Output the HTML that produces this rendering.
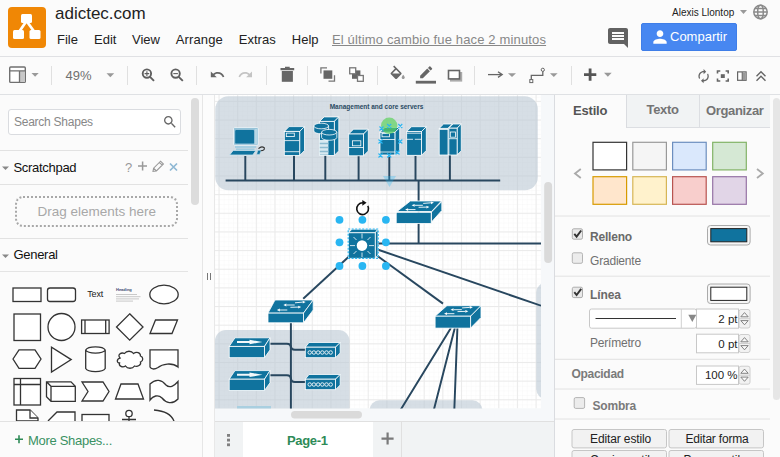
<!DOCTYPE html>
<html><head><meta charset="utf-8">
<style>
*{box-sizing:border-box;margin:0;padding:0}
html,body{width:780px;height:457px;overflow:hidden;background:#fbfbfb;font-family:"Liberation Sans",sans-serif;color:#000;position:relative}
.a{position:absolute}
.t{position:absolute;white-space:nowrap;line-height:1}
svg{position:absolute;overflow:visible}
</style></head><body>
<!-- HEADER -->
<div class="a" style="left:0;top:0;width:780px;height:57px;background:#fbfbfb;border-bottom:1px solid #e0e1e4"></div>
<svg style="left:0;top:0" width="60" height="56">
  <rect x="8" y="7" width="38" height="41" rx="4" fill="#f08705"/>
  <rect x="21" y="14" width="11" height="9" rx="1.5" fill="#fff"/>
  <rect x="13" y="30" width="11" height="9" rx="1.5" fill="#fff"/>
  <rect x="29.5" y="30" width="11" height="9" rx="1.5" fill="#fff"/>
  <path d="M26.5 21 L19 32 M26.5 21 L34.5 32" stroke="#fff" stroke-width="2.7" fill="none"/>
</svg>
<div class="t" style="left:55px;top:5px;font-size:17px;color:#222">adictec.com</div>
<div class="t" style="left:57px;top:33px;font-size:13px;color:#222">File</div>
<div class="t" style="left:94px;top:33px;font-size:13px;color:#222">Edit</div>
<div class="t" style="left:132px;top:33px;font-size:13px;color:#222">View</div>
<div class="t" style="left:175.7px;top:33px;font-size:13px;color:#222;letter-spacing:0.15px">Arrange</div>
<div class="t" style="left:238.8px;top:33px;font-size:13px;color:#222">Extras</div>
<div class="t" style="left:291.8px;top:33px;font-size:13px;color:#222">Help</div>
<div class="t" style="left:332px;top:33px;font-size:13px;color:#888;text-decoration:underline;letter-spacing:0.15px">El último cambio fue hace 2 minutos</div>
<div class="t" style="left:672px;top:8px;font-size:10px;color:#222">Alexis Llontop</div>
<svg style="left:740px;top:10px" width="8" height="5"><path d="M0 0H7L3.5 4z" fill="#999"/></svg>
<svg style="left:752px;top:4px" width="18" height="18" viewBox="0 0 18 18">
  <g fill="none" stroke="#8a8a8a" stroke-width="1.5"><circle cx="8.5" cy="8" r="6.7"/><ellipse cx="8.5" cy="8" rx="2.8" ry="6.7"/><path d="M1.8 8H15.2M2.8 4.6H14.2M2.8 11.4H14.2"/></g>
</svg>
<svg style="left:606px;top:26px" width="24" height="24" viewBox="0 0 24 24"><path fill="#626262" d="M21.99 4c0-1.1-.89-2-1.99-2H4c-1.1 0-2 .9-2 2v12c0 1.1.9 2 2 2h14l4 4-.01-18zM18 14H6v-2h12v2zm0-3H6V9h12v2zm0-3H6V6h12v2z"/></svg>
<div class="a" style="left:641px;top:23px;width:96px;height:28px;background:#4787f1;border-radius:2px;border:1px solid #3f7ee8"></div>
<svg style="left:650px;top:27px" width="20" height="20" viewBox="0 0 24 24"><path fill="#fff" d="M12 12c2.21 0 4-1.79 4-4s-1.79-4-4-4-4 1.79-4 4 1.79 4 4 4zm0 2c-2.67 0-8 1.34-8 4v2h16v-2c0-2.66-5.33-4-8-4z"/></svg>
<div class="t" style="left:670px;top:30px;font-size:13px;color:#fff">Compartir</div>

<!-- TOOLBAR -->
<div class="a" style="left:0;top:57px;width:780px;height:38px;background:#fbfbfb;border-bottom:1px solid #dfe1e4"></div>

<div class="a" style="left:51px;top:66px;width:1px;height:19px;background:#e0e0e0"></div>
<div class="a" style="left:127px;top:66px;width:1px;height:19px;background:#e0e0e0"></div>
<div class="a" style="left:196px;top:66px;width:1px;height:19px;background:#e0e0e0"></div>
<div class="a" style="left:266px;top:66px;width:1px;height:19px;background:#e0e0e0"></div>
<div class="a" style="left:307px;top:66px;width:1px;height:19px;background:#e0e0e0"></div>
<div class="a" style="left:377px;top:66px;width:1px;height:19px;background:#e0e0e0"></div>
<div class="a" style="left:474px;top:66px;width:1px;height:19px;background:#e0e0e0"></div>
<div class="a" style="left:571px;top:66px;width:1px;height:19px;background:#e0e0e0"></div>
<svg style="left:0;top:56px" width="780" height="39" viewBox="0 56 780 39">
  <!-- layout icon -->
  <rect x="9.7" y="67" width="15.6" height="15.4" rx="1" fill="#fff" stroke="#707070" stroke-width="1.4"/>
  <rect x="19.5" y="71" width="5.5" height="11" fill="#c8c8c8"/>
  <path d="M9.7 70.9H25.3M19.5 71V82.4" stroke="#707070" stroke-width="1.3" fill="none"/>
  <path d="M31.5 73H38.7L35.1 76.8z" fill="#999"/>
  <text x="65.5" y="79.7" font-family="Liberation Sans" font-size="13" fill="#707070">49%</text>
  <path d="M106.5 73.3H114.2L110.35 77.2z" fill="#999"/>
  <!-- zoom in/out -->
  <g fill="none" stroke="#5f5f5f" stroke-width="1.9">
    <circle cx="146.9" cy="73.6" r="4.2"/><path d="M150 76.8L154 80.9"/>
    <circle cx="175.6" cy="73.6" r="4.2"/><path d="M178.7 76.8L182.8 80.9"/>
  </g>
  <path d="M144.6 73.6H149.2M146.9 71.3V75.9" stroke="#5f5f5f" stroke-width="1.1"/>
  <path d="M173.3 73.6H177.9" stroke="#5f5f5f" stroke-width="1.1"/>
  <!-- undo redo -->
  <g transform="translate(209.5,66.8) scale(0.66)"><path fill="#666" d="M12.5 8c-2.65 0-5.05.99-6.9 2.6L2 7v9h9l-3.62-3.62c1.39-1.16 3.16-1.88 5.12-1.88 3.54 0 6.55 2.31 7.6 5.5l2.37-.78C21.08 11.03 17.15 8 12.5 8z"/></g>
  <g transform="translate(237.5,66.8) scale(0.66)"><path fill="#c4c4c4" d="M18.4 10.6C16.55 8.99 14.15 8 11.5 8c-4.65 0-8.58 3.03-9.96 7.22L3.9 16c1.05-3.19 4.05-5.5 7.6-5.5 1.950 0 3.73.72 5.12 1.88L13 16h9V7l-3.6 3.6z"/></g>
  <!-- trash -->
  <path d="M280.5 68H294.2V70.2H280.5z M285 66.8H289.7V68H285z" fill="#666"/>
  <path d="M281.8 71H292.9V81.8H281.8z" fill="#666"/>
  <!-- to front -->
  <path d="M320.9 73.5V67.8H327" fill="none" stroke="#777" stroke-width="1.3"/>
  <rect x="323.5" y="70.4" width="8.8" height="8.4" fill="#666"/>
  <path d="M328.5 81.1H334.5V75.3" fill="none" stroke="#777" stroke-width="1.3"/>
  <!-- to back -->
  <rect x="352" y="70.4" width="8.4" height="8.4" fill="#666"/>
  <rect x="349.7" y="67.8" width="6" height="6" fill="#fff" stroke="#777" stroke-width="1.3"/>
  <rect x="357.5" y="75.5" width="5.8" height="5.8" fill="#fff" stroke="#777" stroke-width="1.3"/>
  <!-- fill bucket -->
  <g transform="translate(388.2,65.6) scale(0.79)"><path fill="#666" d="M16.56 8.94L7.62 0 6.21 1.41l2.38 2.38-5.15 5.15c-.59.59-.59 1.54 0 2.12l5.5 5.5c.29.29.68.44 1.06.44s.77-.15 1.06-.44l5.5-5.5c.59-.58.59-1.53 0-2.12zM5.21 10L10 5.21 14.79 10H5.21z"/><path fill="#999" d="M19 11.5s-2 2.17-2 3.5c0 1.1.9 2 2 2s2-.9 2-2c0-1.33-2-3.5-2-3.5z"/></g>
  <!-- pencil -->
  <g transform="translate(417.3,66.3) scale(0.71)"><path fill="#666" d="M17.75 7L14 3.25l-10 10V17h3.75l10-10zm2.96-2.96c.39-.39.39-1.02 0-1.41L18.37.29c-.39-.39-1.02-.39-1.41 0L15 2.25 18.75 6l1.96-1.96z"/></g>
  <rect x="415.8" y="80.8" width="20.2" height="2.8" fill="#666"/>
  <!-- shadow -->
  <rect x="450" y="72" width="12.2" height="9.6" fill="#aaa"/>
  <rect x="448.5" y="70.5" width="11" height="8.4" fill="#fff" stroke="#666" stroke-width="1.6"/>
  <!-- arrow -->
  <path d="M488 74.6H501" stroke="#666" stroke-width="1.3"/>
  <path d="M498 71.8L502.2 74.6L498 77.4" fill="none" stroke="#666" stroke-width="1.3"/>
  <path d="M508 73.3H516L512 77.1z" fill="#999"/>
  <!-- waypoint -->
  <path d="M531.3 81V75.3H542.8V69.5" fill="none" stroke="#666" stroke-width="1.3"/>
  <rect x="529.8" y="79.6" width="3" height="3" fill="#fff" stroke="#666" stroke-width="1"/>
  <circle cx="542.8" cy="69.8" r="1.6" fill="#fff" stroke="#666" stroke-width="1"/>
  <path d="M550 73.3H557.6L553.8 77.1z" fill="#999"/>
  <!-- plus -->
  <path d="M590.1 68.5V80.7M584 74.6H596.3" stroke="#555" stroke-width="2.8"/>
  <path d="M604 72.8H611.7L607.85 76.7z" fill="#999"/>
  <!-- refresh -->
  <g transform="translate(695.8,68.4) scale(0.65)"><path fill="#666" d="M12 6v3l4-4-4-4v3c-4.42 0-8 3.58-8 8 0 1.57.46 3.030 1.24 4.26L6.7 14.8c-.45-.83-.7-1.79-.7-2.8 0-3.31 2.69-6 6-6zm6.76 1.74L17.3 9.2c.44.84.7 1.79.7 2.8 0 3.310-2.69 6-6 6v-3l-4 4 4 4v-3c4.42 0 8-3.58 8-8 0-1.57-.46-3.03-1.24-4.26z"/></g>
  <!-- fit -->
  <path d="M717.5 73.5V71H720.3M725.6 71H728.2V73.5M728.2 78.5V81H725.6M720.3 81H717.5V78.5" fill="none" stroke="#666" stroke-width="1.6"/>
  <rect x="720.8" y="74.2" width="4" height="3.8" fill="#666"/>
  <!-- panel -->
  <rect x="737.6" y="71.9" width="8.5" height="8.4" fill="#fff" stroke="#666" stroke-width="1.2"/>
  <rect x="742.2" y="72.4" width="3.5" height="7.6" fill="#999"/>
  <path d="M742.2 72V80.3" stroke="#666" stroke-width="1"/>
  <!-- chevrons -->
  <path d="M756.5 76.3L761 71.8L765.5 76.3M756.5 80.8L761 76.3L765.5 80.8" fill="none" stroke="#666" stroke-width="1.4"/>
</svg>

<!-- SIDEBAR -->
<div class="a" style="left:0;top:95px;width:203px;height:362px;background:#fbfbfb;border-right:1px solid #e6e6e6"></div>
<div class="a" style="left:8px;top:109px;width:173px;height:26px;background:#fff;border:1px solid #dadce0;border-radius:3px"></div>
<div class="t" style="left:14px;top:116px;font-size:12px;color:#888;letter-spacing:-0.25px">Search Shapes</div>
<svg style="left:161.5px;top:113.5px" width="16" height="16" viewBox="0 0 24 24"><path fill="#666" d="M15.5 14h-.79l-.28-.27C15.41 12.59 16 11.11 16 9.5 16 5.91 13.09 3 9.5 3S3 5.91 3 9.5 5.91 16 9.5 16c1.61 0 3.090-.59 4.23-1.57l.27.28v.79l5 4.99L20.49 19l-4.99-5zm-6 0C7.01 14 5 11.99 5 9.5S7.01 5 9.5 5 14 7.010 14 9.5 11.99 14 9.5 14z"/></svg>
<div class="a" style="left:0;top:150px;width:188px;height:1px;background:#e2e2e2"></div>
<svg style="left:0;top:160px" width="12" height="12"><path d="M2 6.5H9L5.5 10z" fill="#888"/></svg>
<div class="t" style="left:13.5px;top:160.5px;font-size:13px;color:#111;letter-spacing:-0.3px">Scratchpad</div>
<div class="t" style="left:125px;top:160.5px;font-size:13px;color:#999">?</div>
<svg style="left:136px;top:159px" width="45" height="14">
  <path d="M6.6 2.5V11.5M2 7H11" stroke="#999" stroke-width="1.5"/>
  <path d="M17 12.3L17.6 9.2L24.6 2.2L27.4 5L20.4 12z M23.4 3.4L26.2 6.2M17.6 9.2L20.4 12" fill="none" stroke="#999" stroke-width="1.1"/>
  <path d="M34 4.5L41 11.5M41 4.5L34 11.5" stroke="#8fb8d4" stroke-width="1.7"/>
</svg>
<div class="a" style="left:0;top:184px;width:188px;height:1px;background:#e2e2e2"></div>
<div class="a" style="left:15px;top:196px;width:163px;height:31px;border:2px dotted #a8a8a8;border-radius:8px"></div>
<div class="t" style="left:37.5px;top:205px;font-size:13.5px;color:#a8a8a8">Drag elements here</div>
<div class="a" style="left:0;top:238px;width:188px;height:1px;background:#e2e2e2"></div>
<svg style="left:0;top:248px" width="12" height="12"><path d="M2 6.5H9L5.5 10z" fill="#888"/></svg>
<div class="t" style="left:13.5px;top:247.5px;font-size:13px;color:#111;letter-spacing:-0.3px">General</div>
<div class="a" style="left:0;top:271px;width:188px;height:1px;background:#e4e4e4"></div>
<div class="a" style="left:191px;top:98px;width:8px;height:107px;background:#dcdcdc;border-radius:4px"></div>
<svg style="left:0;top:270px" width="190" height="152" viewBox="0 270 190 152">
 <g fill="#fff" stroke="#333" stroke-width="1.3">
  <rect x="13" y="288" width="28" height="13.5"/>
  <rect x="47.5" y="288" width="28" height="13.5" rx="2.5"/>
  <ellipse cx="164" cy="294.5" rx="14.2" ry="9.3"/>
  <rect x="14" y="314" width="26.5" height="26.5"/>
  <circle cx="61.5" cy="327" r="13.5"/>
  <rect x="81.6" y="320" width="27.5" height="13.5"/>
  <path d="M85 320V333.5M105.7 320V333.5"/>
  <path d="M129.7 313.8L143 327L129.7 340.2L116.5 327z"/>
  <path d="M155.5 320H177.5L172 333.5H150z"/>
  <path d="M13 359L19 349.8H35L41 359L35 368.3H19z"/>
  <path d="M51.5 347.2V372L71.2 359.6z"/>
  <path d="M85.7 350V368.5A10 4 0 0 0 105.2 368.5V350A10 4 0 0 0 85.7 350z M85.7 350A10 4 0 0 0 105.2 350"/>
  <path d="M120 358c-3-3 1-6 4.5-4.5 2-3 7-3 9 0 3-2 7-1 7 2.5 3 1 3 5 0 6 1 3-3 5-6 4-2 3-7 3-9 0-3 2-7 0-6-3-3 0-3-4 0.5-5z"/>
  <path d="M150 349.8H178V367C172 362 162 364 158 367.5C154 370 151 369 150 367z"/>
  <rect x="14" y="378.5" width="26.5" height="26.5"/>
  <path d="M20.5 378.5V405M14 384.5H40.5" />
  <path d="M46.5 381.8H71L75.3 386.3V401.3H51L46.5 396.8z M46.5 381.8L51 386.3H75.3M51 386.3V401.3"/>
  <path d="M82 382H103L109 391.5L103 401H82L88 391.5z"/>
  <path d="M121 384H138L143.5 399H115.5z"/>
  <path d="M150 384C156 378 162 380 166 385C170 389 175 385 178 381.5V399C172 405 166 403 162 398C158 394 153 396 150 400z"/>
  <path d="M16.5 421V410H30L38 418V421z"/>
  <path d="M30 410V418H38"/>
  <path d="M48 421L57 412H75V421"/>
  <rect x="82" y="414.5" width="27" height="10"/>
  <circle cx="129" cy="413.5" r="3.2"/>
  <path d="M122 419.5H136M129 416.7V421"/>
  <path d="M154 410C166 411 172 416 174 421"/>
 </g>
 <text x="87.3" y="297" font-family="Liberation Sans" font-size="9" letter-spacing="-0.2" fill="#222">Text</text>
 <text x="116" y="290.5" font-family="Liberation Sans" font-size="4" font-weight="bold" fill="#3a4a70">Heading</text>
 <g stroke="#8a8a8a" stroke-width="0.45"><path d="M116 294.5H137M116 296.7H140.5M116 298.9H139M116 301.1H133"/></g>
</svg>
<div class="a" style="left:0;top:421px;width:203px;height:36px;background:#fbfbfb;border-top:1px solid #e2e2e2;border-right:1px solid #e6e6e6"></div>
<svg style="left:13px;top:433px" width="12" height="12"><path d="M6 2.3V10.3M2 6.3H10" stroke="#2e8b57" stroke-width="1.6"/></svg>
<div class="t" style="left:28px;top:433.5px;font-size:13px;color:#3a9163;letter-spacing:-0.3px">More Shapes...</div>
<!-- HSPLIT -->
<div class="a" style="left:203px;top:95px;width:12px;height:362px;background:#fcfcfc;border-right:1px solid #e8e8e8"></div>
<div class="a" style="left:207px;top:273px;width:1.3px;height:7px;background:#777"></div>
<div class="a" style="left:209.5px;top:273px;width:1.3px;height:7px;background:#777"></div>

<!-- CANVAS -->
<div class="a" style="left:215px;top:95px;width:339px;height:326px;background:#f6f8fa"></div>
<svg style="left:0;top:0" width="780" height="457" viewBox="0 0 780 457">
 <defs>
  <pattern id="gmin" patternUnits="userSpaceOnUse" x="219" y="194.6" width="4.6625" height="4.6625">
    <path d="M0 0.25H4.6625M0.25 0V4.6625" stroke="#f3f3f3" stroke-width="0.4" fill="none"/>
  </pattern>
  <pattern id="gmaj" patternUnits="userSpaceOnUse" x="218.5" y="194.1" width="18.65" height="18.65">
    <path d="M0 0.5H18.65M0.5 0V18.65" stroke="#eaeaea" stroke-width="1" fill="none"/>
  </pattern>
  <clipPath id="cc"><rect x="215" y="95" width="326" height="313.5"/></clipPath>
 </defs>
 <g clip-path="url(#cc)">
  <rect x="215" y="95" width="326" height="313.5" fill="#fff"/>
  <rect x="215" y="95" width="326" height="313.5" fill="url(#gmin)"/>
  <rect x="215" y="95" width="326" height="313.5" fill="url(#gmaj)"/>
  <!-- groups -->
  <g fill="#bac8d3" fill-opacity="0.6">
   <rect x="215.3" y="96.3" width="322.5" height="94" rx="13"/>
   <rect x="215" y="330" width="134.5" height="100" rx="11"/>
   <rect x="369.6" y="400.3" width="112.8" height="40" rx="10"/>
   <rect x="536.3" y="282.6" width="40" height="116.5" rx="10"/>
  </g>
  <text x="376.5" y="108.8" text-anchor="middle" font-family="Liberation Sans" font-size="6.5" font-weight="bold" fill="#2a4a62">Management and core servers</text>
  <!-- edges -->
  <g stroke="#28475f" stroke-width="1.95" fill="none">
   <path d="M225.6 180.4H500.2"/>
   <path d="M245.3 156V180.4M294 155V180.4M325.3 155V180.4M358.6 156V180.4M389.3 155V180.4M415.5 156V180.4M449.9 155V180.4"/>
   <path d="M418.6 180V243.5M378 243.5H541"/>
   <path d="M377.5 249.5L541 305.7"/>
   <path d="M377.5 256L443 303.6"/>
   <path d="M349 256.5L303.2 298.7"/>
   <path d="M290.9 322.8V410"/>
   <path d="M269.5 343.8H286.9Q290.9 343.8 290.9 347.8M290.9 345.8Q290.9 349.8 294.9 349.8H306"/>
   <path d="M269.5 375.3H286.9Q290.9 375.3 290.9 379.3M290.9 377.9Q290.9 381.9 294.9 381.9H306"/>
   <path d="M450.9 328L400.5 410M454.8 328L433.8 410M457.4 328L454.3 410"/>
  </g>
  <!-- PC -->
  <rect x="233.6" y="127.6" width="24.6" height="17.6" rx="1" fill="#8fbfd6" stroke="#fff" stroke-width="0.7"/>
  <rect x="235.2" y="129.9" width="19" height="13.7" rx="1.2" fill="#10739e"/>
  <rect x="254.6" y="129" width="2.8" height="15" fill="#b5d6e5"/>
  <rect x="235" y="146.2" width="21" height="1.6" fill="#9ccae0"/>
  <rect x="236" y="148.5" width="18.5" height="1.5" fill="#9ccae0"/>
  <path d="M233.2 150.4H256L252.8 155H229.6z" fill="#10739e" stroke="#cfe6f0" stroke-width="0.8"/>
  <path d="M257.8 150.2H261.4L259.6 154.4H256.6z" fill="#10739e" stroke="#cfe6f0" stroke-width="0.6"/>
  <path d="M258.5 148.7Q261.5 145.6 264.3 147.8Q265 150.3 260.8 150.8" stroke="#333" stroke-width="1.1" fill="none"/>
  <!-- servers -->
  <path d="M284.3 131.4L289.1 126.6H304.5L299.7 131.4z" fill="#10739e" stroke="#fff" stroke-width="0.8"/><path d="M299.7 131.4L304.5 126.6V150.6L299.7 155.4z" fill="#10739e" stroke="#fff" stroke-width="0.8"/><rect x="284.3" y="131.4" width="15.399999999999999" height="24.0" fill="#10739e" stroke="#fff" stroke-width="0.8"/>
  <g fill="none" stroke="#fff" stroke-width="0.8"><rect x="286.3" y="133.1" width="8" height="3.5"/><path d="M284.3 140.6H299.5M284.3 151.7H299.5"/></g>
  <!-- db server -->
  <path d="M319.6 121.4L324.1 116.9H338.8L334.3 121.4z" fill="#10739e" stroke="#fff" stroke-width="0.8"/><path d="M334.3 121.4L338.8 116.9V150.9L334.3 155.4z" fill="#10739e" stroke="#fff" stroke-width="0.8"/><rect x="319.6" y="121.4" width="14.7" height="34.0" fill="#10739e" stroke="#fff" stroke-width="0.8"/>
  <rect x="319.8" y="140" width="8.6" height="14.8" fill="#d8e9f1"/><path d="M319.8 143.5H328.4M319.8 147.5H328.4M319.8 151.5H328.4" stroke="#8dbbd0" stroke-width="1.3"/>
  <g stroke="#fff" stroke-width="0.8">
   <path d="M313.8 126V131A7.4 2.8 0 0 0 328.6 131V126z" fill="#10739e"/><ellipse cx="321.2" cy="126" rx="7.4" ry="2.8" fill="#10739e"/>
   <path d="M321.6 132.2V137.5A7.6 2.8 0 0 0 336.8 137.5V132.2z" fill="#10739e"/><ellipse cx="329.2" cy="132.2" rx="7.6" ry="2.8" fill="#10739e"/>
  </g>
  <path d="M348.7 134.0L353.5 129.2H368.3L363.5 134.0z" fill="#10739e" stroke="#fff" stroke-width="0.8"/><path d="M363.5 134.0L368.3 129.2V150.99999999999997L363.5 155.79999999999998z" fill="#10739e" stroke="#fff" stroke-width="0.8"/><rect x="348.7" y="134.0" width="14.8" height="21.8" fill="#10739e" stroke="#fff" stroke-width="0.8"/>
  <g fill="none" stroke="#fff" stroke-width="0.8"><rect x="352.5" y="140.8" width="8.3" height="5"/><path d="M348.7 147.5H363.5"/></g>
  <path d="M380 132.3L384.8 127.5H399.7L394.9 132.3z" fill="#10739e" stroke="#fff" stroke-width="0.8"/><path d="M394.9 132.3L399.7 127.5V150.2L394.9 155.0z" fill="#10739e" stroke="#fff" stroke-width="0.8"/><rect x="380" y="132.3" width="14.899999999999999" height="22.7" fill="#10739e" stroke="#fff" stroke-width="0.8"/>
  <g fill="none" stroke="#fff" stroke-width="0.8"><rect x="382" y="133.5" width="7.5" height="3.3"/><path d="M380 139.5H395M380 152H395"/></g>
  <path d="M406.7 131.5L411.5 126.7H426.3L421.5 131.5z" fill="#10739e" stroke="#fff" stroke-width="0.8"/><path d="M421.5 131.5L426.3 126.7V150.5L421.5 155.3z" fill="#10739e" stroke="#fff" stroke-width="0.8"/><rect x="406.7" y="131.5" width="14.8" height="23.8" fill="#10739e" stroke="#fff" stroke-width="0.8"/>
  <g fill="none" stroke="#fff" stroke-width="0.8"><path d="M406.7 133.2H421.5M406.7 139.3H413M414.8 139.3H421.5"/></g>
  <!-- tower 6 -->
  <path d="M439.2 128.4L443.59999999999997 124H452.4L448.0 128.4z" fill="#10739e" stroke="#fff" stroke-width="0.8"/><path d="M448.0 128.4L452.4 124V150.6L448.0 155z" fill="#10739e" stroke="#fff" stroke-width="0.8"/><rect x="439.2" y="128.4" width="8.799999999999999" height="26.6" fill="#10739e" stroke="#fff" stroke-width="0.8"/>
  <path d="M448.9 128.2L453.09999999999997 124H461.29999999999995L457.09999999999997 128.2z" fill="#10739e" stroke="#fff" stroke-width="0.8"/><path d="M457.09999999999997 128.2L461.29999999999995 124V150.8L457.09999999999997 155z" fill="#10739e" stroke="#fff" stroke-width="0.8"/><rect x="448.9" y="128.2" width="8.2" height="26.8" fill="#10739e" stroke="#fff" stroke-width="0.8"/>
  <g fill="none" stroke="#fff" stroke-width="0.8"><rect x="450.3" y="132" width="5.2" height="5.2"/><path d="M448.9 138.7H457.1M439.2 129.5H448.5"/></g>
  <!-- hover marks -->
  <circle cx="389.2" cy="125.8" r="8.2" fill="#5ed35e" fill-opacity="0.7"/>
  <g stroke="#29b6f2" stroke-width="1.1">
   <path d="M379.5 126.5l4 4m0-4l-4 4 M387.2 124l4 4m0-4l-4 4 M398.3 124l4 4m0-4l-4 4 M378.5 139.5l4 4m0-4l-4 4 M398.3 139.5l4 4m0-4l-4 4 M378.5 153.5l4 4m0-4l-4 4 M387.2 153.5l4 4m0-4l-4 4 M395.5 150.5l4 4m0-4l-4 4"/>
  </g>
  <path d="M383 176H396L389.5 187z" fill="#29b6f2" fill-opacity="0.3"/>
  <!-- switch top -->
  <g fill="#10739e" stroke="#fff" stroke-width="0.8">
   <path d="M397 211.5L410.4 201H441.4L431.5 211.5z"/>
   <path d="M431.5 212L441.8 201.5V210.5L431.5 222z"/>
   <rect x="396.2" y="212.3" width="35" height="11.2"/>
  </g>
  <path d="M423.2 203.4L430.9 202.8" stroke="#fff" stroke-width="0.9"/><path d="M433.9 202.6L431.0 204.2L430.8 201.4z" fill="#fff"/><path d="M422.9 205.3L414.6 205.3" stroke="#fff" stroke-width="0.9"/><path d="M411.6 205.3L414.6 203.9L414.6 206.7z" fill="#fff"/><path d="M418.6 207.3L426.4 207.1" stroke="#fff" stroke-width="0.9"/><path d="M429.4 207.0L426.4 208.5L426.4 205.7z" fill="#fff"/><path d="M415.5 209.6L408.1 209.6" stroke="#fff" stroke-width="0.9"/><path d="M405.1 209.6L408.1 208.2L408.1 211.0z" fill="#fff"/>
  <!-- core switch -->
  <g fill="#10739e" stroke="#fff" stroke-width="0.8">
   <path d="M348.4 232.8L352 229.2H378L375.2 232.8z"/>
   <path d="M375.2 232.8L378 229.2V255L375.2 258.3z"/>
   <rect x="348.4" y="232.8" width="26.8" height="25.5"/>
  </g>
  <circle cx="362" cy="245.6" r="5.3" fill="#fff"/>
  <g stroke="#fff" stroke-width="0.8"><path d="M362 233.5V238.5M362 252.5V257M350 245.6H355M369 245.6H374M353.5 237l3 3M370.5 237l-3 3M353.5 254l3-3M370.5 254l-3-3"/></g>
  <rect x="348.2" y="229" width="30" height="29.4" fill="none" stroke="#29b6f2" stroke-width="1.2" stroke-dasharray="2 1.5"/>
  <!-- switch L -->
  <g fill="#10739e" stroke="#fff" stroke-width="0.8">
   <path d="M268 313.1L275 300H313.2L303.5 313.1z"/>
   <path d="M303.5 313.1L313.2 300V310L303.5 322.8z"/>
   <rect x="268" y="313.1" width="35.5" height="9.7"/>
  </g>
  <path d="M295.0 302.8L302.7 302.1" stroke="#fff" stroke-width="0.9"/><path d="M305.7 301.9L302.8 303.5L302.6 300.7z" fill="#fff"/><path d="M294.7 305.0L286.4 305.0" stroke="#fff" stroke-width="0.9"/><path d="M283.4 305.0L286.4 303.6L286.4 306.4z" fill="#fff"/><path d="M290.4 307.3L298.2 307.1" stroke="#fff" stroke-width="0.9"/><path d="M301.2 307.0L298.2 308.5L298.2 305.7z" fill="#fff"/><path d="M287.3 310.0L279.9 310.0" stroke="#fff" stroke-width="0.9"/><path d="M276.9 310.0L279.9 308.6L279.9 311.4z" fill="#fff"/>
  <!-- switch R -->
  <g fill="#10739e" stroke="#fff" stroke-width="0.8">
   <path d="M435.1 316.2L446.9 305.7H481L470.6 316.2z"/>
   <path d="M470.6 316.2L481 305.7V317.5L470.6 328.1z"/>
   <rect x="435.1" y="316.2" width="35.5" height="11.9"/>
  </g>
  <path d="M462.1 307.9L469.8 307.4" stroke="#fff" stroke-width="0.9"/><path d="M472.8 307.2L469.9 308.8L469.7 306.0z" fill="#fff"/><path d="M461.8 309.7L453.5 309.7" stroke="#fff" stroke-width="0.9"/><path d="M450.5 309.7L453.5 308.3L453.5 311.1z" fill="#fff"/><path d="M457.5 311.6L465.3 311.4" stroke="#fff" stroke-width="0.9"/><path d="M468.3 311.3L465.3 312.8L465.3 310.0z" fill="#fff"/><path d="M454.4 313.7L447.0 313.7" stroke="#fff" stroke-width="0.9"/><path d="M444.0 313.7L447.0 312.3L447.0 315.1z" fill="#fff"/>
  <!-- routers -->
  <g fill="#10739e" stroke="#fff" stroke-width="0.8">
   <path d="M229.2 346.4L235 337.8H270L264.5 346.4z"/><path d="M264.5 346.4L270 337.8V350L264.5 357.7z"/><rect x="229.2" y="346.4" width="35.3" height="11.3"/>
   <path d="M229.2 379.2L235 370.6H270L264.5 379.2z"/><path d="M264.5 379.2L270 370.6V382.8L264.5 390.5z"/><rect x="229.2" y="379.2" width="35.3" height="11.3"/>
   
  </g>
  <g stroke="#f4f9fb" stroke-width="2"><path d="M237 342H254M237 374.8H254"/></g>
  <path d="M249.5 339.8L262.5 342L249.5 344.2z M249.5 372.6L262.5 374.8L249.5 377z" fill="#f4f9fb"/>
  <rect x="237" y="406" width="34" height="2.8" fill="#a9cfe0"/>
  <!-- hubs -->
  <g fill="#10739e" stroke="#fff" stroke-width="0.8">
   <path d="M305.3 347.2L309 342.5H340.2L335.5 347.2z"/><path d="M335.5 347.2L340.2 342.5V353L335.5 357.7z"/><rect x="305.3" y="347.2" width="30.2" height="10.5"/>
   <path d="M305.3 379.2L309 374.5H340.2L335.5 379.2z"/><path d="M335.5 379.2L340.2 374.5V385L335.5 389.7z"/><rect x="305.3" y="379.2" width="30.2" height="10.5"/>
  </g>
  <g fill="none" stroke="#fff" stroke-width="0.85">
   <circle cx="309.7" cy="352.5" r="1.75"/><circle cx="313.9" cy="352.5" r="1.75"/><circle cx="318.1" cy="352.5" r="1.75"/><circle cx="322.3" cy="352.5" r="1.75"/><circle cx="326.5" cy="352.5" r="1.75"/><circle cx="330.7" cy="352.5" r="1.75"/>
   <circle cx="309.7" cy="384.5" r="1.75"/><circle cx="313.9" cy="384.5" r="1.75"/><circle cx="318.1" cy="384.5" r="1.75"/><circle cx="322.3" cy="384.5" r="1.75"/><circle cx="326.5" cy="384.5" r="1.75"/><circle cx="330.7" cy="384.5" r="1.75"/>
  </g>
  <!-- handles -->
  <g fill="#29b6f2">
   <circle cx="339.5" cy="219.8" r="3.9"/><circle cx="362.4" cy="219.8" r="3.9"/><circle cx="385.9" cy="219.8" r="3.9"/>
   <circle cx="339.5" cy="242.3" r="3.9"/><circle cx="385.9" cy="242.3" r="3.9"/>
   <circle cx="339.5" cy="266" r="3.9"/><circle cx="362.4" cy="266" r="3.9"/><circle cx="385.9" cy="266" r="3.9"/>
  </g>
  <circle cx="362.7" cy="208.7" r="5.9" fill="#fff" fill-opacity="0.7"/>
  <path d="M362.9 202.8A5.9 5.9 0 1 0 367.8 205.8" fill="none" stroke="#111" stroke-width="1.6"/>
  <path d="M362.3 199.9L366.6 202.8L362.3 205.7z" fill="#111"/>
 </g>
 <!-- scrollbars -->
 <rect x="544.2" y="182" width="7.9" height="81" rx="4" fill="#dadada"/>
 <rect x="291" y="411" width="71" height="7.5" rx="3.7" fill="#dadada"/>
</svg>
<!-- TAB BAR -->
<div class="a" style="left:215px;top:421px;width:339px;height:36px;background:#f1f3f4;border-top:1px solid #e0e0e0"></div>
<div class="a" style="left:243px;top:422px;width:130px;height:35px;background:#fff"></div>
<div class="a" style="left:401px;top:422px;width:1px;height:35px;background:#e0e0e0"></div>
<svg style="left:225px;top:432px" width="8" height="16"><g fill="#808080"><rect x="2" y="2" width="3" height="2.8"/><rect x="2" y="6.7" width="3" height="2.8"/><rect x="2" y="11.4" width="3" height="2.8"/></g></svg>
<div class="t" style="left:287px;top:433.5px;font-size:13px;font-weight:bold;color:#2e8b57;letter-spacing:-0.35px">Page-1</div>
<svg style="left:380px;top:431px" width="16" height="16"><path d="M7.6 1.5V13.6M1.5 7.6H13.6" stroke="#7a7a7a" stroke-width="2.2"/></svg>

<!-- FORMAT PANEL -->
<div class="a" style="left:554px;top:95px;width:226px;height:362px;background:#fbfbfb;border-left:1px solid #dadce0"></div>
<div class="a" style="left:626px;top:95px;width:144px;height:33px;background:#f1f3f4;border-bottom:1px solid #dcdee2"></div>
<div class="a" style="left:626px;top:95px;width:1px;height:33px;background:#dadce0"></div>
<div class="a" style="left:699px;top:95px;width:1px;height:33px;background:#dcdee2"></div>
<div class="t" style="left:573px;top:104px;font-size:13px;font-weight:bold;color:#555;letter-spacing:-0.2px">Estilo</div>
<div class="t" style="left:646.5px;top:103.3px;font-size:13px;font-weight:bold;color:#747474;letter-spacing:-0.3px">Texto</div>
<div class="t" style="left:706px;top:103.5px;font-size:13px;font-weight:bold;color:#747474;letter-spacing:-0.35px">Organizar</div>
<div class="a" style="left:772.5px;top:98px;width:7px;height:302px;background:#e6e6e6;border-radius:3.5px"></div>
<svg style="left:554px;top:95px" width="226" height="362" viewBox="554 95 226 362">
  <g stroke-width="1.2">
   <rect x="593" y="142.3" width="33.6" height="27.6" fill="#ffffff" stroke="#333"/>
   <rect x="632.8" y="142.3" width="33.6" height="27.6" fill="#f5f5f5" stroke="#999"/>
   <rect x="672.6" y="142.3" width="33.6" height="27.6" fill="#dae8fc" stroke="#6c8ebf"/>
   <rect x="712.7" y="142.3" width="33.6" height="27.6" fill="#d5e8d4" stroke="#82b366"/>
   <rect x="593" y="176.7" width="33.6" height="27.6" fill="#ffe6cc" stroke="#d79b00"/>
   <rect x="632.8" y="176.7" width="33.6" height="27.6" fill="#fff2cc" stroke="#d6b656"/>
   <rect x="672.6" y="176.7" width="33.6" height="27.6" fill="#f8cecc" stroke="#b85450"/>
   <rect x="712.7" y="176.7" width="33.6" height="27.6" fill="#e1d5e7" stroke="#9673a6"/>
  </g>
  <path d="M580.8 169L575 173.5L580.8 178M757 169L762.8 173.5L757 178" fill="none" stroke="#aaa" stroke-width="1.8"/>
  <path d="M555 216H770M555 276.2H770M555 359.3H770M555 389H770M555 419H770" stroke="#e2e2e2" stroke-width="1"/>
  <!-- checkboxes -->
  <rect x="572.3" y="228.8" width="10.2" height="10.4" rx="1.5" fill="#e9e9e9" stroke="#adadad"/>
  <path d="M574.3 233.8L576.6 236.6L581.2 230.5" fill="none" stroke="#333" stroke-width="1.9"/>
  <rect x="572.3" y="252.8" width="10.2" height="10.5" rx="1.5" fill="#ececec" stroke="#b4b4b4"/>
  <rect x="572.3" y="287.2" width="10.2" height="10.4" rx="1.5" fill="#e9e9e9" stroke="#adadad"/>
  <path d="M574.3 292.2L576.6 295L581.2 288.9" fill="none" stroke="#333" stroke-width="1.9"/>
  <rect x="574.2" y="397.6" width="10.4" height="10.8" rx="1.5" fill="#ececec" stroke="#b4b4b4"/>
  <!-- color buttons -->
  <rect x="707.5" y="225.5" width="42.6" height="19.5" rx="3" fill="#f6f6f6" stroke="#aaa"/>
  <rect x="710.8" y="228.6" width="36" height="13.2" fill="#10739e" stroke="#222" stroke-width="1"/>
  <rect x="707.5" y="284" width="42.6" height="19.5" rx="3" fill="#f6f6f6" stroke="#aaa"/>
  <rect x="710.8" y="287.2" width="36" height="13.2" fill="#fff" stroke="#222" stroke-width="1"/>
  <!-- line style select -->
  <rect x="589.5" y="309" width="107" height="19.2" rx="2" fill="#fff" stroke="#c8c8c8"/>
  <path d="M681.3 309V328.2" stroke="#d0d0d0"/>
  <path d="M595.5 318.5H676" stroke="#333" stroke-width="1"/>
  <path d="M688.3 314.8H696.3L692.3 322z" fill="#888"/>
  <!-- inputs -->
  <rect x="696.5" y="309" width="42" height="19.2" fill="#fff" stroke="#c8c8c8"/>
  <rect x="696.5" y="334.2" width="42" height="18.6" fill="#fff" stroke="#c8c8c8"/>
  <rect x="696.5" y="366" width="42" height="18.4" fill="#fff" stroke="#c8c8c8"/>
  <g fill="#f2f2f2" stroke="#c4c4c4" stroke-width="0.8">
   <rect x="739" y="309.5" width="11" height="18.5" rx="2"/>
   <rect x="739" y="334.5" width="11" height="18" rx="2"/>
   <rect x="739" y="366.2" width="11" height="18" rx="2"/>
  </g>
  <g fill="#f8f8f8" stroke="#777" stroke-width="0.9">
   <path d="M740.8 316.8L744.5 312.6L748.2 316.8zM740.8 320.6L744.5 324.8L748.2 320.6z"/>
   <path d="M740.8 341.8L744.5 337.6L748.2 341.8zM740.8 345.6L744.5 349.8L748.2 345.6z"/>
   <path d="M740.8 373.3L744.5 369.1L748.2 373.3zM740.8 377.1L744.5 381.3L748.2 377.1z"/>
   <path d="M739 318.7H750M739 343.5H750M739 375.2H750" stroke="#ccc"/>
  </g>
  <!-- buttons -->
  <g fill="#f2f2f2" stroke="#c6c6c6">
   <rect x="572" y="429.5" width="94.5" height="18.4" rx="2"/>
   <rect x="669" y="429.5" width="94.5" height="18.4" rx="2"/>
   <rect x="572" y="450.5" width="94.5" height="18.4" rx="2"/>
   <rect x="669" y="450.5" width="94.5" height="18.4" rx="2"/>
  </g>
</svg>
<div class="t" style="left:590px;top:231px;font-size:12px;font-weight:bold;color:#6a6a6a;letter-spacing:-0.2px">Relleno</div>
<div class="t" style="left:590px;top:254.5px;font-size:12px;color:#707070;letter-spacing:-0.2px">Gradiente</div>
<div class="t" style="left:590px;top:288.5px;font-size:12px;font-weight:bold;color:#6a6a6a;letter-spacing:-0.1px">Línea</div>
<div class="t" style="left:590px;top:337px;font-size:12px;color:#707070;letter-spacing:-0.2px">Perímetro</div>
<div class="t" style="left:571.5px;top:368px;font-size:12px;font-weight:bold;color:#7a7a7a;letter-spacing:-0.3px">Opacidad</div>
<div class="t" style="left:592.5px;top:400px;font-size:12px;font-weight:bold;color:#7a7a7a;letter-spacing:-0.2px">Sombra</div>
<div class="t" style="left:690px;width:47.5px;text-align:right;top:313.5px;font-size:11.5px;color:#222">2 pt</div>
<div class="t" style="left:690px;width:47.5px;text-align:right;top:338.5px;font-size:11.5px;color:#222">0 pt</div>
<div class="t" style="left:690px;width:47.5px;text-align:right;top:370px;font-size:11.5px;color:#222">100 %</div>
<div class="t" style="left:590px;top:432.5px;font-size:12px;color:#222;letter-spacing:-0.12px">Editar estilo</div>
<div class="t" style="left:685.5px;top:432.5px;font-size:12px;color:#222;letter-spacing:-0.2px">Editar forma</div>
<div class="t" style="left:590px;top:453.5px;font-size:12px;color:#222">Copiar estilo</div>
<div class="t" style="left:683.5px;top:453.5px;font-size:12px;color:#222">Pegar estilo</div>
</body></html>
